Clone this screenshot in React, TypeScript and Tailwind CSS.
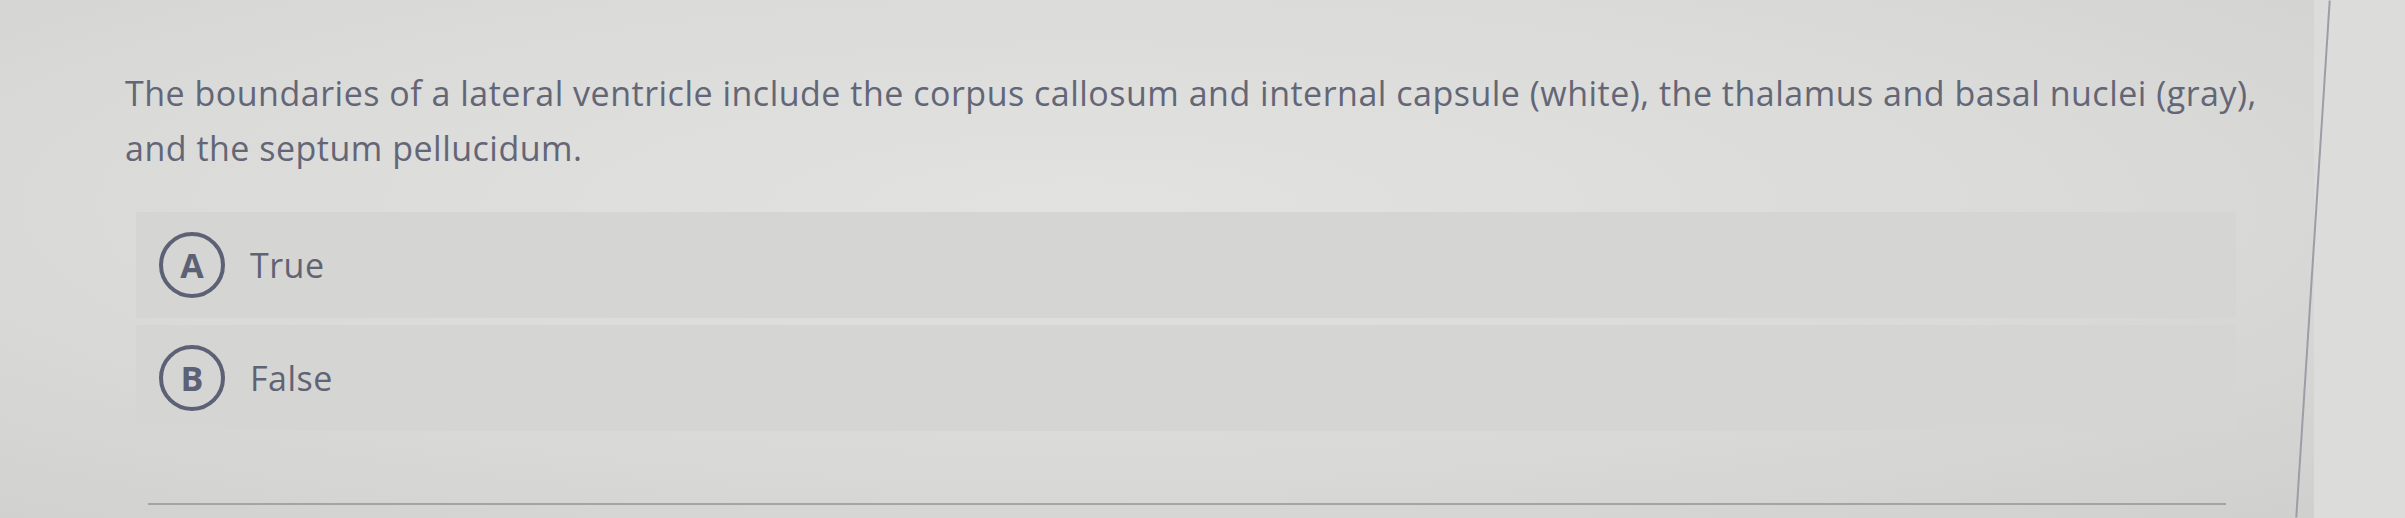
const QUESTION =
  "The boundaries of a lateral ventricle include the corpus callosum and internal capsule (white), the thalamus and basal nuclei (gray), and the septum pellucidum.";

const CHOICES = [
  { letter: "A", label: "True" },
  { letter: "B", label: "False" },
];

function Choice({ letter, label }: { letter: string; label: string }) {
  return (
    <div className="flex h-[106px] items-center gap-[25px] bg-[#d5d5d3] pl-[23px]">
      <span className="flex h-[66px] w-[66px] items-center justify-center rounded-full border-[4px] border-[#5d6175] text-[34px] font-bold leading-none text-[#5d6175]">
        {letter}
      </span>
      <span className="text-[34px] tracking-[0.5px] text-[#5f6374]">{label}</span>
    </div>
  );
}

export default function App() {
  return (
    <div
      className="flex h-[518px] w-[2405px] overflow-hidden bg-[radial-gradient(ellipse_at_45%_40%,#e2e2e0_0%,#dadad8_55%,#cfcfcd_100%)]"
      style={{ fontFamily: '"Open Sans", "Noto Sans", sans-serif' }}
    >
      <main className="flex w-[2312px] flex-col pt-[66px]">
        <p className="w-[2310px] pl-[125px] text-[34px] leading-[55px] tracking-[0.5px] text-[#636676]">
          {QUESTION}
        </p>

        <div className="mt-[36px] flex w-[2100px] flex-col gap-[7px] pl-[136px] box-content">
          {CHOICES.map((c) => (
            <Choice key={c.letter} {...c} />
          ))}
        </div>

        <div className="ml-[148px] mt-[72px] h-[2px] w-[2078px] bg-[#a4a4a4]" />
      </main>

      <div className="h-full w-[2px] rotate-[3.7deg] bg-[#9b9ea6]" />

      <aside className="flex-1 bg-[#dcdcda]" />
    </div>
  );
}
